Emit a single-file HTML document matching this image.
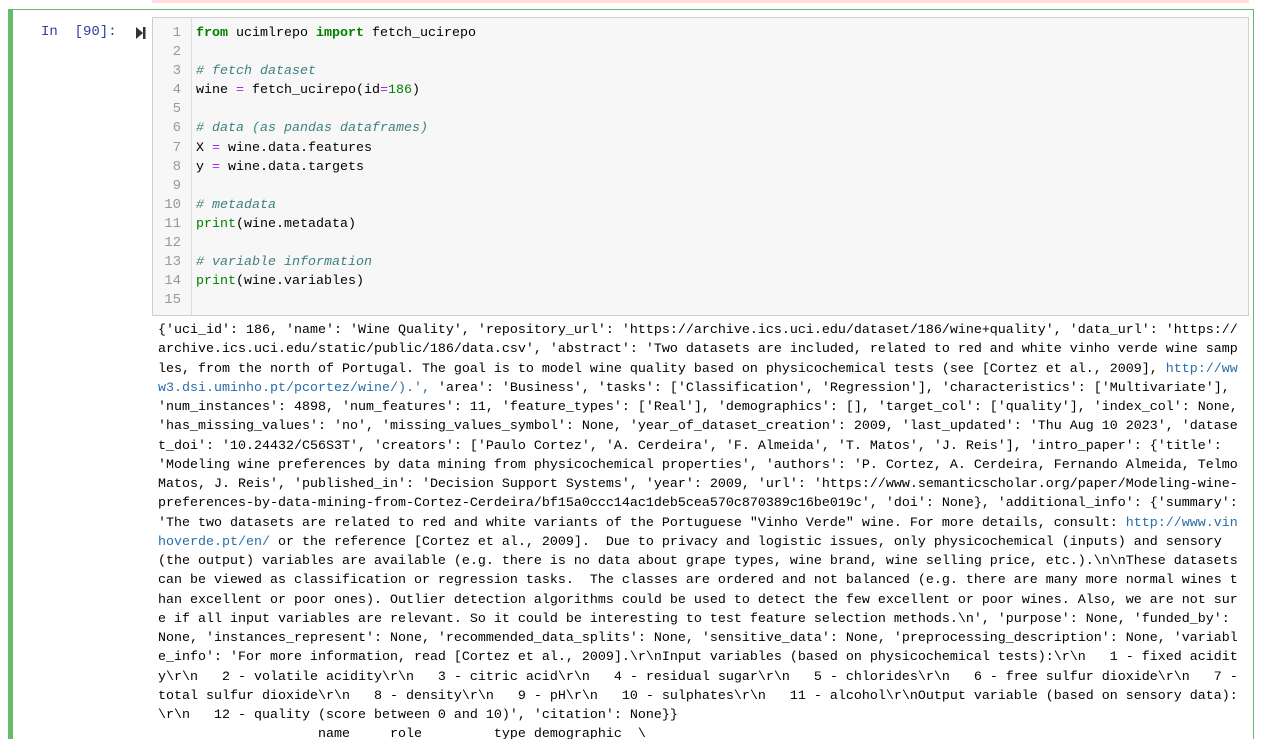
<!DOCTYPE html>
<html style="overflow:hidden;height:739px"><head><meta charset="utf-8"><style>
body{margin:0;width:1261px;height:739px;overflow:hidden;background:#fff;position:relative;font-family:"Liberation Mono","Noto Sans CJK SC",monospace;font-size:13.33px;}
.pink{position:absolute;left:152px;top:0;width:1097px;height:3px;background:#fdd;}
.cell{position:absolute;left:8px;top:9px;width:1246px;height:800px;border:1px solid #66bb6a;border-left:5px solid #66bb6a;box-sizing:border-box;}
.prompt{position:absolute;left:41px;top:23px;color:#303f9f;line-height:19.2px;white-space:pre;font-size:14px;}
.run{position:absolute;left:135px;top:26px;}
.code{position:absolute;left:152px;top:17px;width:1097px;height:299px;background:#f7f7f7;border:1px solid #cfcfcf;box-sizing:border-box;}
.gut{position:absolute;left:0;top:0;width:38px;height:297px;background:#f7f7f7;border-right:1px solid #ddd;}
.ln{position:absolute;left:0;top:6px;width:28px;text-align:right;color:#999;line-height:19.1px;white-space:pre;font-size:14px;}
.src{position:absolute;left:43px;top:6px;line-height:19.1px;white-space:pre;color:#000;}
.k{color:#008000;font-weight:bold}.c{color:#408080;font-style:italic}.o{color:#aa22ff}.n{color:#008000}.b{color:#008000}
.out{position:absolute;left:158px;top:321px;line-height:19.25px;white-space:pre;color:#000;}
.u{color:#296eaa}
</style></head><body>
<div class="pink"></div>
<div class="cell"></div>
<div class="prompt">In  [90]:</div>
<svg class="run" width="12" height="14" viewBox="0 0 12 14"><path d="M1 1 L8 7 L1 13 Z" fill="#333"/><rect x="8" y="1" width="2.5" height="12" fill="#333"/></svg>
<div class="code"><div class="gut"></div>
<div class="ln">1
2
3
4
5
6
7
8
9
10
11
12
13
14
15</div>
<div class="src"><span class="k">from</span> ucimlrepo <span class="k">import</span> fetch_ucirepo

<span class="c"># fetch dataset</span>
wine <span class="o">=</span> fetch_ucirepo(id<span class="o">=</span><span class="n">186</span>)

<span class="c"># data (as pandas dataframes)</span>
X <span class="o">=</span> wine.data.features
y <span class="o">=</span> wine.data.targets

<span class="c"># metadata</span>
<span class="b">print</span>(wine.metadata)

<span class="c"># variable information</span>
<span class="b">print</span>(wine.variables)
</div></div>
<div class="out">{'uci_id': 186, 'name': 'Wine Quality', 'repository_url': 'https://archive.ics.uci.edu/dataset/186/wine+quality', 'data_url': 'https://
archive.ics.uci.edu/static/public/186/data.csv', 'abstract': 'Two datasets are included, related to red and white vinho verde wine samp
les, from the north of Portugal. The goal is to model wine quality based on physicochemical tests (see [Cortez et al., 2009], <span class="u">http://ww</span>
<span class="u">w3.dsi.uminho.pt/pcortez/wine/).',</span> 'area': 'Business', 'tasks': ['Classification', 'Regression'], 'characteristics': ['Multivariate'],
'num_instances': 4898, 'num_features': 11, 'feature_types': ['Real'], 'demographics': [], 'target_col': ['quality'], 'index_col': None,
'has_missing_values': 'no', 'missing_values_symbol': None, 'year_of_dataset_creation': 2009, 'last_updated': 'Thu Aug 10 2023', 'datase
t_doi': '10.24432/C56S3T', 'creators': ['Paulo Cortez', 'A. Cerdeira', 'F. Almeida', 'T. Matos', 'J. Reis'], 'intro_paper': {'title':
'Modeling wine preferences by data mining from physicochemical properties', 'authors': 'P. Cortez, A. Cerdeira, Fernando Almeida, Telmo
Matos, J. Reis', 'published_in': 'Decision Support Systems', 'year': 2009, 'url': 'https://www.semanticscholar.org/paper/Modeling-wine-
preferences-by-data-mining-from-Cortez-Cerdeira/bf15a0ccc14ac1deb5cea570c870389c16be019c', 'doi': None}, 'additional_info': {'summary':
'The two datasets are related to red and white variants of the Portuguese "Vinho Verde" wine. For more details, consult: <span class="u">http://www.vin</span>
<span class="u">hoverde.pt/en/</span> or the reference [Cortez et al., 2009].  Due to privacy and logistic issues, only physicochemical (inputs) and sensory
(the output) variables are available (e.g. there is no data about grape types, wine brand, wine selling price, etc.).\n\nThese datasets
can be viewed as classification or regression tasks.  The classes are ordered and not balanced (e.g. there are many more normal wines t
han excellent or poor ones). Outlier detection algorithms could be used to detect the few excellent or poor wines. Also, we are not sur
e if all input variables are relevant. So it could be interesting to test feature selection methods.\n', 'purpose': None, 'funded_by':
None, 'instances_represent': None, 'recommended_data_splits': None, 'sensitive_data': None, 'preprocessing_description': None, 'variabl
e_info': 'For more information, read [Cortez et al., 2009].\r\nInput variables (based on physicochemical tests):\r\n   1 - fixed acidit
y\r\n   2 - volatile acidity\r\n   3 - citric acid\r\n   4 - residual sugar\r\n   5 - chlorides\r\n   6 - free sulfur dioxide\r\n   7 -
total sulfur dioxide\r\n   8 - density\r\n   9 - pH\r\n   10 - sulphates\r\n   11 - alcohol\r\nOutput variable (based on sensory data):
\r\n   12 - quality (score between 0 and 10)', 'citation': None}}
                    name     role         type demographic  \</div>
</body></html>
